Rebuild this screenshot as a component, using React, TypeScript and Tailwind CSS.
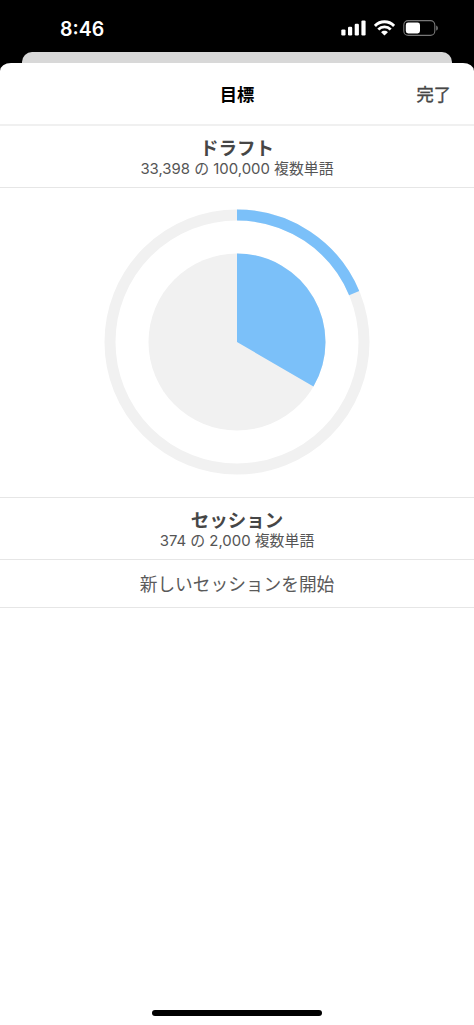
import React from 'react';

const SignalIcon: React.FC = () => (
  <svg width="25" height="16" viewBox="0 0 25 16" fill="white">
    <rect x="0.3" y="9.4" width="4.2" height="6" rx="1.2" />
    <rect x="7" y="6.8" width="4.2" height="8.6" rx="1.2" />
    <rect x="13.7" y="3.8" width="4.2" height="11.6" rx="1.2" />
    <rect x="20.4" y="0.4" width="4.2" height="15" rx="1.2" />
  </svg>
);

const WifiIcon: React.FC = () => (
  <svg width="21" height="16" viewBox="0 0 21 16" fill="none" stroke="white">
    <path d="M0.9 5.9C6.2 0.4 14.8 0.4 20.1 5.9" strokeWidth="2.9" />
    <path d="M4.3 9.4C7.7 6 13.3 6 16.7 9.4" strokeWidth="2.8" />
    <path d="M7.1 12.2C9 10.4 12 10.4 13.9 12.2L10.5 15.6Z" fill="white" stroke="none" />
  </svg>
);

const BatteryIcon: React.FC = () => (
  <svg width="36" height="16" viewBox="0 0 36 16">
    <rect x="0.8" y="0.6" width="31" height="14.8" rx="4.4" fill="none" stroke="#777777" strokeWidth="1.1" />
    <rect x="2.8" y="2.5" width="14.2" height="11" rx="2.4" fill="white" />
    <path d="M33.2 5.4C35.4 6.2 35.4 9.8 33.2 10.6Z" fill="#777777" />
  </svg>
);

const CENTER = 133;

const pointAt = (radius: number, progress: number) => {
  const angle = progress * 2 * Math.PI;
  return `${CENTER + radius * Math.sin(angle)} ${CENTER - radius * Math.cos(angle)}`;
};

const GoalChart: React.FC<{ draft: number; session: number }> = ({ draft, session }) => (
  <svg width="266" height="266" viewBox="0 0 266 266">
    <circle cx={CENTER} cy={CENTER} r="127" fill="none" stroke="#f1f1f1" strokeWidth="11" />
    <path
      d={`M${pointAt(127, 0)}A127 127 0 0 1 ${pointAt(127, session)}`}
      fill="none"
      stroke="#7bc0f9"
      strokeWidth="11"
    />
    <circle cx={CENTER} cy={CENTER} r="88.5" fill="#f1f1f1" />
    <path
      d={`M${CENTER} ${CENTER}L${pointAt(88.5, 0)}A88.5 88.5 0 0 1 ${pointAt(88.5, draft)}Z`}
      fill="#7bc0f9"
    />
  </svg>
);

const GoalHeading: React.FC<{ title: string; detail: string }> = ({ title, detail }) => (
  <div className="flex h-[62px] flex-col items-center border-b border-[#e6e6e6] pt-[11px]">
    <h2 className="text-[18.5px] leading-[22px] font-bold text-[#464646]">{title}</h2>
    <p className="text-[14.9px] leading-[20px] text-[#555555]">{detail}</p>
  </div>
);

const App: React.FC = () => {
  return (
    <div
      lang="ja"
      className="flex h-[1025px] w-[474px] flex-col overflow-hidden bg-black font-['Inter','Noto_Sans_CJK_JP',sans-serif] whitespace-nowrap"
    >
      <div className="flex h-[52px] shrink-0 items-start justify-between pt-[20px] pr-[35px] pl-[60px]">
        <span className="pt-px text-[19.5px] leading-[16px] font-semibold text-white">8:46</span>
        <div className="flex items-center gap-2">
          <SignalIcon />
          <WifiIcon />
          <BatteryIcon />
        </div>
      </div>

      <div className="mx-[22px] h-[11px] shrink-0 rounded-t-[10px] bg-[#d8d8d8]" />

      <main className="flex flex-1 flex-col bg-white [border-radius:11px_11px_0_0/8px_8px_0_0]">
        <header className="grid h-[63px] grid-cols-3 items-center border-b-2 border-[#f0f0f0] px-[23px] pt-[2px]">
          <h1 className="col-start-2 text-center text-[17.3px] font-bold text-black">目標</h1>
          <button className="text-right text-[17.3px] text-[#464646] [-webkit-text-stroke:0.35px_#464646]">完了</button>
        </header>

        <GoalHeading title="ドラフト" detail="33,398 の 100,000 複数単語" />
        <div className="flex h-[310px] items-center justify-center border-b border-[#e6e6e6] pb-px">
          <GoalChart draft={33398 / 100000} session={374 / 2000} />
        </div>
        <GoalHeading title="セッション" detail="374 の 2,000 複数単語" />

        <button className="h-[48px] border-b border-[#e6e6e6] pt-[3px] text-[17.7px] text-[#5a5a5a]">
          新しいセッションを開始
        </button>

        <div className="mx-auto mt-auto mb-[9px] h-[6px] w-[170px] rounded-full bg-black" />
      </main>
    </div>
  );
};

export default App;
